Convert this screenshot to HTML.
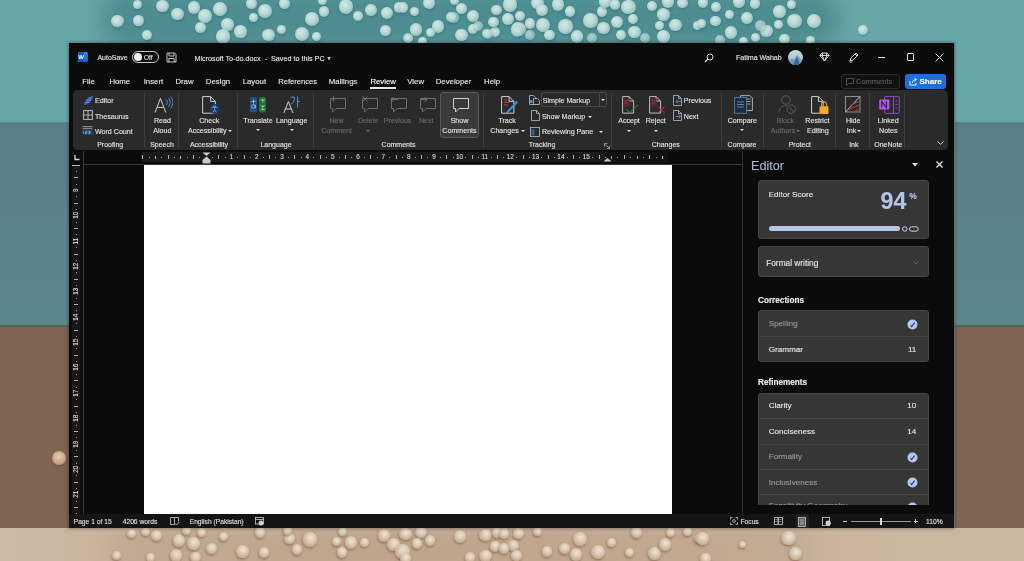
<!DOCTYPE html>
<html><head><meta charset="utf-8">
<style>
*{margin:0;padding:0;box-sizing:border-box}
html,body{width:1024px;height:561px;overflow:hidden}
body{position:relative;font-family:"Liberation Sans",sans-serif;background:#cdb9a6}
.bg{position:absolute;left:0;width:1024px}
.a{position:absolute}
#beadsT i{position:absolute;border-radius:50%;background:radial-gradient(circle at 42% 38%,#d3e8e5 0%,#bddbd8 35%,#98c3c1 72%,#7aaeae 100%);box-shadow:0.5px 1.5px 2px rgba(40,95,100,.35)}
#beadsB{filter:blur(0.35px)}
#beadsT{filter:blur(0.3px)}
#beadsB b{position:absolute;border-radius:50%;background:radial-gradient(circle at 55% 38%,#eee3d5 0%,#dccab4 38%,#c0a78e 75%,#a58a70 100%);box-shadow:-0.5px 1.5px 2.5px rgba(95,65,40,.45)}
#win{position:absolute;left:69px;top:43px;width:885px;height:485px;background:#0b0b0b;overflow:hidden;color:#e8e8e8;box-shadow:0 0 3px 1px rgba(0,0,0,.3)}
.t{position:absolute;white-space:nowrap;line-height:1;-webkit-text-stroke:0.12px currentColor}
</style></head><body>
<div class="bg" style="top:0;height:123px;background:#68a7a9"></div>
<div class="bg" style="top:123px;height:203px;background:linear-gradient(#5c7f89,#5b878c)"></div>
<div class="bg" style="top:326px;height:202px;background:#806453"></div>
<div class="bg" style="top:528px;height:33px;background:linear-gradient(90deg,#cdbaa7 0px,#c8b29d 120px,#c5ad96 400px,#c8b09a 700px,#cbb6a2 900px)"></div>
<div class="bg" style="top:122px;height:2px;background:#4f7d80;opacity:.7"></div>
<div class="bg" style="top:325px;height:2px;background:#4a5048;opacity:.6"></div>
<div class="a" style="left:100px;top:-10px;width:740px;height:58px;background:rgba(30,95,100,.36);filter:blur(10px);border-radius:30px"></div>
<div id="beadsT"><i style="left:111.3px;top:14.7px;width:12.6px;height:12.6px"></i><i style="left:132.5px;top:-0.1px;width:9.0px;height:9.0px"></i><i style="left:133.3px;top:15.1px;width:10.8px;height:10.8px"></i><i style="left:141.6px;top:29.6px;width:10.8px;height:10.8px"></i><i style="left:156.1px;top:-0.4px;width:12.6px;height:12.6px"></i><i style="left:171.4px;top:7.5px;width:12.6px;height:12.6px"></i><i style="left:187.5px;top:1.0px;width:12.6px;height:12.6px"></i><i style="left:197.5px;top:8.8px;width:14.4px;height:14.4px"></i><i style="left:195.2px;top:22.4px;width:10.8px;height:10.8px"></i><i style="left:212.8px;top:1.6px;width:14.4px;height:14.4px"></i><i style="left:221.2px;top:18.0px;width:12.6px;height:12.6px"></i><i style="left:215.8px;top:29.4px;width:14.4px;height:14.4px"></i><i style="left:234.4px;top:25.4px;width:12.6px;height:12.6px"></i><i style="left:246.1px;top:-1.9px;width:10.8px;height:10.8px"></i><i style="left:248.5px;top:13.1px;width:9.0px;height:9.0px"></i><i style="left:257.8px;top:3.6px;width:14.4px;height:14.4px"></i><i style="left:262.2px;top:28.7px;width:12.6px;height:12.6px"></i><i style="left:276.5px;top:24.5px;width:9.0px;height:9.0px"></i><i style="left:279.3px;top:-1.9px;width:10.8px;height:10.8px"></i><i style="left:294.5px;top:26.5px;width:14.4px;height:14.4px"></i><i style="left:304.5px;top:11.8px;width:14.4px;height:14.4px"></i><i style="left:311.5px;top:32.1px;width:9.0px;height:9.0px"></i><i style="left:318.6px;top:6.3px;width:10.8px;height:10.8px"></i><i style="left:318.3px;top:-4.5px;width:9.0px;height:9.0px"></i><i style="left:338.8px;top:-0.8px;width:14.4px;height:14.4px"></i><i style="left:352.6px;top:10.6px;width:10.8px;height:10.8px"></i><i style="left:364.7px;top:3.7px;width:12.6px;height:12.6px"></i><i style="left:380.5px;top:6.7px;width:12.6px;height:12.6px"></i><i style="left:380.4px;top:25.4px;width:10.8px;height:10.8px"></i><i style="left:393.6px;top:1.9px;width:10.8px;height:10.8px"></i><i style="left:397.6px;top:1.9px;width:10.8px;height:10.8px"></i><i style="left:410.1px;top:7.2px;width:9.0px;height:9.0px"></i><i style="left:422.7px;top:-3.3px;width:12.6px;height:12.6px"></i><i style="left:409.7px;top:23.0px;width:12.6px;height:12.6px"></i><i style="left:404.3px;top:33.5px;width:9.0px;height:9.0px"></i><i style="left:431.7px;top:20.1px;width:12.6px;height:12.6px"></i><i style="left:426.3px;top:27.5px;width:9.0px;height:9.0px"></i><i style="left:417.5px;top:36.5px;width:9.0px;height:9.0px"></i><i style="left:449.5px;top:-4.5px;width:9.0px;height:9.0px"></i><i style="left:456.1px;top:3.4px;width:10.8px;height:10.8px"></i><i style="left:445.6px;top:11.6px;width:10.8px;height:10.8px"></i><i style="left:466.7px;top:9.7px;width:12.6px;height:12.6px"></i><i style="left:455.2px;top:28.7px;width:12.6px;height:12.6px"></i><i style="left:467.6px;top:23.6px;width:10.8px;height:10.8px"></i><i style="left:481.5px;top:29.2px;width:9.0px;height:9.0px"></i><i style="left:489.6px;top:26.6px;width:10.8px;height:10.8px"></i><i style="left:491.3px;top:4.6px;width:10.8px;height:10.8px"></i><i style="left:488.4px;top:16.6px;width:10.8px;height:10.8px"></i><i style="left:502.8px;top:-2.8px;width:14.4px;height:14.4px"></i><i style="left:501.7px;top:12.7px;width:12.6px;height:12.6px"></i><i style="left:511.4px;top:21.8px;width:14.4px;height:14.4px"></i><i style="left:514.6px;top:10.6px;width:10.8px;height:10.8px"></i><i style="left:524.6px;top:18.0px;width:10.8px;height:10.8px"></i><i style="left:531.4px;top:-3.3px;width:12.6px;height:12.6px"></i><i style="left:535.7px;top:3.7px;width:12.6px;height:12.6px"></i><i style="left:535.5px;top:17.8px;width:14.4px;height:14.4px"></i><i style="left:544.0px;top:29.6px;width:10.8px;height:10.8px"></i><i style="left:551.7px;top:-1.9px;width:12.6px;height:12.6px"></i><i style="left:564.6px;top:6.3px;width:10.8px;height:10.8px"></i><i style="left:558.3px;top:19.2px;width:14.4px;height:14.4px"></i><i style="left:570.7px;top:30.3px;width:12.6px;height:12.6px"></i><i style="left:583.3px;top:13.3px;width:14.4px;height:14.4px"></i><i style="left:597.3px;top:21.5px;width:12.6px;height:12.6px"></i><i style="left:596.6px;top:6.3px;width:10.8px;height:10.8px"></i><i style="left:598.7px;top:-4.8px;width:12.6px;height:12.6px"></i><i style="left:610.7px;top:15.7px;width:12.6px;height:12.6px"></i><i style="left:609.6px;top:-1.0px;width:10.8px;height:10.8px"></i><i style="left:621.3px;top:0.1px;width:14.4px;height:14.4px"></i><i style="left:615.6px;top:29.6px;width:10.8px;height:10.8px"></i><i style="left:627.6px;top:13.6px;width:10.8px;height:10.8px"></i><i style="left:628.1px;top:25.7px;width:12.6px;height:12.6px"></i><i style="left:646.6px;top:0.6px;width:10.8px;height:10.8px"></i><i style="left:657.4px;top:8.3px;width:12.6px;height:12.6px"></i><i style="left:654.5px;top:20.5px;width:9.0px;height:9.0px"></i><i style="left:669.1px;top:18.7px;width:12.6px;height:12.6px"></i><i style="left:657.4px;top:30.3px;width:12.6px;height:12.6px"></i><i style="left:661.7px;top:-4.8px;width:12.6px;height:12.6px"></i><i style="left:677.3px;top:-2.4px;width:10.8px;height:10.8px"></i><i style="left:692.5px;top:20.5px;width:9.0px;height:9.0px"></i><i style="left:697.6px;top:-2.8px;width:10.8px;height:10.8px"></i><i style="left:710.6px;top:1.6px;width:10.8px;height:10.8px"></i><i style="left:696.9px;top:18.5px;width:9.0px;height:9.0px"></i><i style="left:710.0px;top:15.6px;width:10.8px;height:10.8px"></i><i style="left:724.5px;top:10.2px;width:9.0px;height:9.0px"></i><i style="left:732.7px;top:-4.7px;width:12.6px;height:12.6px"></i><i style="left:749.6px;top:-2.1px;width:10.8px;height:10.8px"></i><i style="left:740.7px;top:11.7px;width:12.6px;height:12.6px"></i><i style="left:724.5px;top:26.3px;width:12.6px;height:12.6px"></i><i style="left:750.5px;top:33.0px;width:9.0px;height:9.0px"></i><i style="left:760.3px;top:24.7px;width:12.6px;height:12.6px"></i><i style="left:773.4px;top:5.1px;width:12.6px;height:12.6px"></i><i style="left:773.5px;top:20.0px;width:9.0px;height:9.0px"></i><i style="left:786.5px;top:0.4px;width:9.0px;height:9.0px"></i><i style="left:787.2px;top:13.8px;width:14.4px;height:14.4px"></i><i style="left:806.8px;top:13.8px;width:14.4px;height:14.4px"></i><i style="left:779.2px;top:33.6px;width:10.8px;height:10.8px"></i><i style="left:806.2px;top:36.3px;width:9.0px;height:9.0px"></i><i style="left:857.5px;top:24.6px;width:10.8px;height:10.8px"></i><i style="left:739.3px;top:37.2px;width:9.0px;height:9.0px"></i><i style="left:447.5px;top:12.1px;width:11.0px;height:11.0px;opacity:.7"></i><i style="left:511.0px;top:25.0px;width:12.0px;height:12.0px;opacity:.7"></i><i style="left:483.0px;top:28.7px;width:10.0px;height:10.0px;opacity:.7"></i><i style="left:525.0px;top:30.0px;width:10.0px;height:10.0px;opacity:.7"></i><i style="left:403.0px;top:33.0px;width:10.0px;height:10.0px;opacity:.7"></i><i style="left:473.0px;top:21.0px;width:10.0px;height:10.0px;opacity:.7"></i><i style="left:587.0px;top:33.0px;width:10.0px;height:10.0px;opacity:.7"></i><i style="left:715.0px;top:35.0px;width:10.0px;height:10.0px;opacity:.7"></i><i style="left:754.5px;top:19.5px;width:11.0px;height:11.0px;opacity:.7"></i><i style="left:640.0px;top:33.0px;width:10.0px;height:10.0px;opacity:.7"></i></div>
<div class="a" style="left:110px;top:530px;width:700px;height:45px;background:rgba(120,85,55,.09);filter:blur(9px);border-radius:20px"></div>
<div id="beadsB"><b style="left:52px;top:450.5px;width:14px;height:14px;background:radial-gradient(circle at 50% 40%,#e6cdb4 0%,#cfae90 45%,#a98668 90%)"></b><b style="left:126.5px;top:529.3px;width:9.0px;height:9.0px"></b><b style="left:140.5px;top:527.3px;width:9.0px;height:9.0px"></b><b style="left:151.2px;top:530.3px;width:10.8px;height:10.8px"></b><b style="left:172.7px;top:534.3px;width:12.6px;height:12.6px"></b><b style="left:187.4px;top:537.2px;width:12.6px;height:12.6px"></b><b style="left:205.9px;top:543.0px;width:10.8px;height:10.8px"></b><b style="left:218.5px;top:532.2px;width:9.0px;height:9.0px"></b><b style="left:181.5px;top:525.5px;width:9.0px;height:9.0px"></b><b style="left:197.1px;top:528.3px;width:9.0px;height:9.0px"></b><b style="left:169.7px;top:549.0px;width:12.6px;height:12.6px"></b><b style="left:190.3px;top:551.6px;width:10.8px;height:10.8px"></b><b style="left:146.3px;top:552.5px;width:9.0px;height:9.0px"></b><b style="left:112.1px;top:550.5px;width:9.0px;height:9.0px"></b><b style="left:236.3px;top:545.1px;width:12.6px;height:12.6px"></b><b style="left:254.6px;top:527.4px;width:10.8px;height:10.8px"></b><b style="left:258.6px;top:546.9px;width:10.8px;height:10.8px"></b><b style="left:284.1px;top:533.3px;width:10.8px;height:10.8px"></b><b style="left:291.6px;top:544.0px;width:10.8px;height:10.8px"></b><b style="left:283.0px;top:526.4px;width:9.0px;height:9.0px"></b><b style="left:302.6px;top:532.4px;width:14.4px;height:14.4px"></b><b style="left:337.5px;top:527.3px;width:9.0px;height:9.0px"></b><b style="left:331.5px;top:537.1px;width:9.0px;height:9.0px"></b><b style="left:344.5px;top:536.3px;width:12.6px;height:12.6px"></b><b style="left:336.6px;top:546.9px;width:10.8px;height:10.8px"></b><b style="left:360.0px;top:538.1px;width:9.0px;height:9.0px"></b><b style="left:377.7px;top:529.4px;width:12.6px;height:12.6px"></b><b style="left:387.4px;top:538.2px;width:12.6px;height:12.6px"></b><b style="left:399.2px;top:527.5px;width:12.6px;height:12.6px"></b><b style="left:414.7px;top:525.5px;width:12.6px;height:12.6px"></b><b style="left:411.6px;top:538.1px;width:10.8px;height:10.8px"></b><b style="left:424.6px;top:535.2px;width:10.8px;height:10.8px"></b><b style="left:395.3px;top:544.2px;width:14.4px;height:14.4px"></b><b style="left:400.1px;top:552.8px;width:10.8px;height:10.8px"></b><b style="left:453.7px;top:530.4px;width:12.6px;height:12.6px"></b><b style="left:479.2px;top:528.5px;width:12.6px;height:12.6px"></b><b style="left:491.6px;top:527.4px;width:10.8px;height:10.8px"></b><b style="left:489.6px;top:541.1px;width:10.8px;height:10.8px"></b><b style="left:464.6px;top:551.8px;width:10.8px;height:10.8px"></b><b style="left:479.2px;top:549.9px;width:12.6px;height:12.6px"></b><b style="left:498.6px;top:528.4px;width:10.8px;height:10.8px"></b><b style="left:513.2px;top:528.4px;width:10.8px;height:10.8px"></b><b style="left:532.5px;top:527.3px;width:9.0px;height:9.0px"></b><b style="left:508.3px;top:540.1px;width:10.8px;height:10.8px"></b><b style="left:498.6px;top:543.0px;width:10.8px;height:10.8px"></b><b style="left:511.2px;top:549.9px;width:10.8px;height:10.8px"></b><b style="left:541.6px;top:546.0px;width:10.8px;height:10.8px"></b><b style="left:559.1px;top:543.0px;width:10.8px;height:10.8px"></b><b style="left:572.8px;top:531.5px;width:14.4px;height:14.4px"></b><b style="left:569.7px;top:548.0px;width:12.6px;height:12.6px"></b><b style="left:590.5px;top:545.1px;width:14.4px;height:14.4px"></b><b style="left:606.8px;top:538.1px;width:9.0px;height:9.0px"></b><b style="left:624.5px;top:547.8px;width:9.0px;height:9.0px"></b><b style="left:631.3px;top:527.4px;width:10.8px;height:10.8px"></b><b style="left:648.0px;top:547.0px;width:12.6px;height:12.6px"></b><b style="left:658.7px;top:538.2px;width:12.6px;height:12.6px"></b><b style="left:665.5px;top:528.3px;width:9.0px;height:9.0px"></b><b style="left:683.0px;top:527.3px;width:9.0px;height:9.0px"></b><b style="left:693.5px;top:534.2px;width:9.0px;height:9.0px"></b><b style="left:696.4px;top:532.4px;width:12.6px;height:12.6px"></b><b style="left:700.2px;top:552.8px;width:10.8px;height:10.8px"></b><b style="left:739.1px;top:540.9px;width:7.2px;height:7.2px"></b><b style="left:781.4px;top:530.5px;width:14.4px;height:14.4px"></b><b style="left:789.2px;top:547.0px;width:12.6px;height:12.6px"></b></div>
<div class="a" style="left:954px;top:43px;width:1px;height:485px;background:#7a8585;opacity:.8"></div>
<div id="win">

  <!-- title bar -->
  <div class="a" style="left:9px;top:9px;width:10px;height:10px;background:linear-gradient(135deg,#41a5ee,#185abd);border-radius:1.5px"></div>
  <div class="a" style="left:9px;top:9px;width:6px;height:10px;background:#185abd;border-radius:1px;color:#fff;font-size:6px;font-weight:bold;line-height:10px;text-align:center">W</div>
  <div class="t" style="left:28.4px;top:11px;font-size:7px;color:#e6e6e6">AutoSave</div>
  <div class="a" style="left:63px;top:8.3px;width:27px;height:11.5px;border:1px solid #c8c8c8;border-radius:6px"></div>
  <div class="a" style="left:65px;top:10.3px;width:7.6px;height:7.6px;background:#f0f0f0;border-radius:50%"></div>
  <div class="t" style="left:75px;top:11.8px;font-size:6.5px;color:#e6e6e6">Off</div>
  <svg class="a" style="left:96.5px;top:9px" width="11" height="11" viewBox="0 0 11 11"><path d="M1 1h7.5l1.5 1.5v7.5h-9z M3 1v3h5v-3 M2.8 10v-3.5h5.4v3.5" fill="none" stroke="#d8d8d8" stroke-width="0.9"/></svg>
  <div class="t" style="left:125.5px;top:11.9px;font-size:7.2px;color:#e6e6e6">Microsoft To-do.docx&nbsp; - &nbsp;Saved to this PC&nbsp;<span style="font-size:5px;position:relative;top:-1px">&#9660;</span></div>
  <svg class="a" style="left:635px;top:10px" width="10" height="10" viewBox="0 0 10 10"><circle cx="6" cy="4" r="3" fill="none" stroke="#e0e0e0" stroke-width="1"/><path d="M3.9 6.1L1 9" stroke="#e0e0e0" stroke-width="1.1"/></svg>
  <div class="t" style="left:666.9px;top:12.2px;font-size:7.1px;color:#e6e6e6">Fatima Wahab</div>
  <svg class="a" style="left:719.2px;top:6.7px" width="15" height="15" viewBox="0 0 15 15"><defs><linearGradient id="av" x1="0" y1="0" x2="0" y2="1"><stop offset="0" stop-color="#d2dde4"/><stop offset="1" stop-color="#88aecb"/></linearGradient><clipPath id="avc"><circle cx="7.5" cy="7.5" r="7.5"/></clipPath></defs><g clip-path="url(#avc)"><rect width="15" height="15" fill="url(#av)"/><path d="M0 13L4 8 6 10 9 5 15 12V15H0z" fill="#6f9cc0"/><path d="M5 15L9 6.5 12 15z" fill="#3e6688"/></g></svg>
  <svg class="a" style="left:750px;top:9px" width="11" height="10" viewBox="0 0 11 10"><path d="M3 1h5l2 2.5-4.5 5.5-4.5-5.5z M1 3.5h9 M4 1l-0.8 2.5 2.3 5.5 2.3-5.5-0.8-2.5" fill="none" stroke="#e6e6e6" stroke-width="0.9"/></svg>
  <svg class="a" style="left:778.5px;top:8.5px" width="11" height="11" viewBox="0 0 11 11"><path d="M2 9l1-3 5-5 2 2-5 5z M7 2l2 2 M1.5 10h3" fill="none" stroke="#e6e6e6" stroke-width="0.9"/></svg>
  <div class="a" style="left:809px;top:14px;width:7px;height:1px;background:#e6e6e6"></div>
  <div class="a" style="left:837.6px;top:10.3px;width:7.6px;height:7.6px;border:1px solid #e6e6e6;border-radius:1px"></div>
  <svg class="a" style="left:866px;top:10px" width="9" height="9" viewBox="0 0 9 9"><path d="M0.5 0.5l8 8M8.5 0.5l-8 8" stroke="#e6e6e6" stroke-width="1"/></svg>
  <div class="a" style="left:771.8px;top:31px;width:59px;height:14.6px;border:1px solid #2c2c2c;border-radius:3px;background:#111"></div>
  <svg class="a" style="left:776.5px;top:34.5px" width="8" height="8" viewBox="0 0 8 8"><path d="M0.5 0.5h7v5h-5l-2 2z" fill="none" stroke="#555" stroke-width="0.9"/></svg>
  <div class="t" style="left:787px;top:34.8px;font-size:7.5px;color:#5e5e5e">Comments</div>
  <div class="a" style="left:836.2px;top:31px;width:41.2px;height:14.6px;background:#1e6fd9;border-radius:3px"></div>
  <svg class="a" style="left:840px;top:34px" width="9" height="9" viewBox="0 0 9 9"><path d="M1 4v4h6v-2 M3.5 6c0-2.5 1.5-3.5 4-3.5 M5.5 1l2 1.5-2 1.5" fill="none" stroke="#fff" stroke-width="0.9"/></svg>
  <div class="t" style="left:850.5px;top:34.6px;font-size:8px;color:#fff;font-weight:bold">Share</div>
  <!-- tabs -->
  <div class="t" style="left:13.2px;top:35px;font-size:7.8px;color:#e8e8e8">File</div>
  <div class="t" style="left:40.4px;top:35px;font-size:7.8px;color:#e8e8e8">Home</div>
  <div class="t" style="left:74.7px;top:35px;font-size:7.8px;color:#e8e8e8">Insert</div>
  <div class="t" style="left:106.4px;top:35px;font-size:7.8px;color:#e8e8e8">Draw</div>
  <div class="t" style="left:136.8px;top:35px;font-size:7.8px;color:#e8e8e8">Design</div>
  <div class="t" style="left:173.7px;top:35px;font-size:7.8px;color:#e8e8e8">Layout</div>
  <div class="t" style="left:209.2px;top:35px;font-size:7.6px;color:#e8e8e8">References</div>
  <div class="t" style="left:259.8px;top:35px;font-size:7.8px;color:#e8e8e8">Mailings</div>
  <div class="t" style="left:301.4px;top:35px;font-size:7.8px;color:#fff">Review</div>
  <div class="a" style="left:301.4px;top:44px;width:26px;height:1.5px;background:#e8e8e8"></div>
  <div class="t" style="left:338.3px;top:35px;font-size:7.8px;color:#e8e8e8">View</div>
  <div class="t" style="left:366.7px;top:35px;font-size:7.8px;color:#e8e8e8">Developer</div>
  <div class="t" style="left:415px;top:35px;font-size:7.8px;color:#e8e8e8">Help</div>
  <!-- ribbon -->
<div class="a" style="left:4.4px;top:47px;width:874.7px;height:60.3px;background:#2a2a2a;border-radius:5px"></div>
<div class="a" style="left:74.8px;top:50px;width:1px;height:55px;background:#3d3d3d"></div>
<div class="a" style="left:109.4px;top:50px;width:1px;height:55px;background:#3d3d3d"></div>
<div class="a" style="left:167.5px;top:50px;width:1px;height:55px;background:#3d3d3d"></div>
<div class="a" style="left:244.3px;top:50px;width:1px;height:55px;background:#3d3d3d"></div>
<div class="a" style="left:413.5px;top:50px;width:1px;height:55px;background:#3d3d3d"></div>
<div class="a" style="left:541.9px;top:50px;width:1px;height:55px;background:#3d3d3d"></div>
<div class="a" style="left:651.6px;top:50px;width:1px;height:55px;background:#3d3d3d"></div>
<div class="a" style="left:693.9px;top:50px;width:1px;height:55px;background:#3d3d3d"></div>
<div class="a" style="left:765.6px;top:50px;width:1px;height:55px;background:#3d3d3d"></div>
<div class="a" style="left:800.2px;top:50px;width:1px;height:55px;background:#3d3d3d"></div>
<div class="a" style="left:835.3px;top:50px;width:1px;height:55px;background:#3d3d3d"></div>
<svg class="a" style="left:13.5px;top:51.6px" width="11" height="11" viewBox="0 0 11 11"><path d="M0.8 10.2C1.5 6 4.5 2 10.2 0.8C9.5 5 7 8.8 0.8 10.2z" fill="#2f5fb8"/><path d="M2.5 7.5h4M3.5 5.2h4.5M5.5 3h3.5" stroke="#6d9be8" stroke-width="0.8"/></svg>
<div class="t" style="left:26.0px;top:54.9px;font-size:7.1px;color:#e4e4e4">Editor</div>
<svg class="a" style="left:13.8px;top:67.0px" width="10" height="10" viewBox="0 0 10 10"><rect x="0.6" y="0.6" width="8.8" height="8.8" fill="none" stroke="#bdbdbd" stroke-width="1"/><path d="M5 0.6v8.8M0.6 5h8.8" stroke="#bdbdbd" stroke-width="0.9"/></svg>
<div class="t" style="left:26.0px;top:70.5px;font-size:7.1px;color:#e4e4e4">Thesaurus</div>
<svg class="a" style="left:13.4px;top:83.4px" width="11" height="9" viewBox="0 0 11 9"><path d="M0.5 0.7h10M0.5 2.7h10" stroke="#bdbdbd" stroke-width="0.8"/><rect x="0.5" y="4.3" width="10" height="4.3" fill="#244a7a"/><path d="M1.5 5.3v2.5M3.5 5.3h1.5v1.2h-1.5v1.3h1.5M6.5 5.3h1.5v2.5h-1.5M6.5 6.5h1.5" stroke="#9ec0ee" stroke-width="0.6" fill="none"/></svg>
<div class="t" style="left:26.0px;top:86.0px;font-size:7.1px;color:#e4e4e4">Word Count</div>
<div class="t" style="left:1.2px;width:80px;text-align:center;top:98.1px;font-size:7px;color:#e4e4e4">Proofing</div>
<svg class="a" style="left:84.6px;top:52.9px" width="19" height="17" viewBox="0 0 19 17"><path d="M1 16.6L6.4 2.4L11.8 16.6M3 11.4h6.8" fill="none" stroke="#cfcfcf" stroke-width="1"/><path d="M12.2 3.6c1.6 1.4 1.6 4.2 0 5.6M14.3 2c2.5 2.2 2.5 6.6 0 8.8M16.4 0.6c3.2 3 3.2 8.6 0 11.6" fill="none" stroke="#4a8fdc" stroke-width="1"/></svg>
<div class="t" style="left:53.4px;width:80px;text-align:center;top:75.1px;font-size:7.1px;color:#e4e4e4">Read</div>
<div class="t" style="left:53.4px;width:80px;text-align:center;top:85.0px;font-size:7.1px;color:#e4e4e4">Aloud</div>
<div class="t" style="left:53.0px;width:80px;text-align:center;top:98.1px;font-size:7px;color:#e4e4e4">Speech</div>
<svg class="a" style="left:132.6px;top:52.7px" width="18" height="19" viewBox="0 0 18 19"><path d="M0.6 0.6h8l4.8 4.8v11.8h-12.8z M8.6 0.6v4.8h4.8" fill="none" stroke="#cfcfcf" stroke-width="1"/><circle cx="12.6" cy="13" r="5" fill="#1d3a62"/><path d="M12.6 9.6a0.9 0.9 0 1 0 0.01 0M9.8 11.4h5.6M12.6 11.4v2.2M12.6 13.6l-1.6 2.8M12.6 13.6l1.6 2.8" fill="none" stroke="#5a9ae6" stroke-width="1"/></svg>
<div class="t" style="left:100.2px;width:80px;text-align:center;top:75.1px;font-size:7.1px;color:#e4e4e4">Check</div>
<div class="t" style="left:98.3px;width:80px;text-align:center;top:85.0px;font-size:7.1px;color:#e4e4e4">Accessibility</div>
<div class="a" style="left:158.5px;top:86.8px;width:0;height:0;border-left:2px solid transparent;border-right:2px solid transparent;border-top:2.2px solid #e4e4e4"></div>
<div class="t" style="left:100.0px;width:80px;text-align:center;top:98.1px;font-size:7px;color:#e4e4e4">Accessibility</div>
<svg class="a" style="left:180.2px;top:52.7px" width="19" height="17" viewBox="0 0 19 17"><rect x="1" y="1" width="7" height="15.5" rx="1.5" fill="#244f86"/><rect x="10" y="1" width="7" height="15.5" rx="1.5" fill="#23703a"/><path d="M2.5 5.5h4M4.5 3.5v4M2.6 10.5a1.8 1.8 0 1 0 3.6 0a1.8 1.8 0 1 0-3.6 0M6.2 8.7v3.6" fill="none" stroke="#a8c8f0" stroke-width="0.8"/><path d="M11.8 4h4M13.8 3v3.5M11.8 9.5c1 1.5 3 1.5 4 0M13.8 9.5v4M11.8 13.5h4" fill="none" stroke="#a9e0b4" stroke-width="0.8"/></svg>
<div class="t" style="left:149.0px;width:80px;text-align:center;top:75.1px;font-size:7.1px;color:#e4e4e4">Translate</div>
<div class="a" style="left:187.0px;top:86.0px;width:0;height:0;border-left:2px solid transparent;border-right:2px solid transparent;border-top:2.2px solid #e4e4e4"></div>
<svg class="a" style="left:213.8px;top:52.7px" width="19" height="18" viewBox="0 0 19 18"><path d="M0.8 17L5.4 5.6L10 17M2.5 13h5.8" fill="none" stroke="#cfcfcf" stroke-width="1"/><path d="M7.5 1.2h4c0 3-1 5.5-3.5 7M14.5 0.5v11M14.5 5.5h2.5" fill="none" stroke="#4a8fdc" stroke-width="1"/></svg>
<div class="t" style="left:182.7px;width:80px;text-align:center;top:75.1px;font-size:7.1px;color:#e4e4e4">Language</div>
<div class="a" style="left:220.7px;top:86.0px;width:0;height:0;border-left:2px solid transparent;border-right:2px solid transparent;border-top:2.2px solid #e4e4e4"></div>
<div class="t" style="left:167.0px;width:80px;text-align:center;top:98.1px;font-size:7px;color:#e4e4e4">Language</div>
<svg class="a" style="left:258.5px;top:52.5px" width="19" height="17" viewBox="0 0 19 17"><path d="M2.5 2.5h15v10h-9.5l-3.5 3.5v-3.5h-2z" fill="none" stroke="#6e6e6e" stroke-width="1"/><path d="M5.5 0.3v5M3 2.8h5" stroke="#6e6e6e" stroke-width="1"/></svg>
<div class="t" style="left:227.6px;width:80px;text-align:center;top:75.1px;font-size:7.1px;color:#6b6b6b">New</div>
<div class="t" style="left:227.6px;width:80px;text-align:center;top:85.0px;font-size:7.1px;color:#6b6b6b">Comment</div>
<svg class="a" style="left:290.8px;top:52.5px" width="19" height="17" viewBox="0 0 19 17"><path d="M2.5 2.5h15v10h-9.5l-3.5 3.5v-3.5h-2z" fill="none" stroke="#6e6e6e" stroke-width="1"/><path d="M2.5 0.5l5 5M7.5 0.5l-5 5" stroke="#6e6e6e" stroke-width="1"/></svg>
<div class="t" style="left:259.2px;width:80px;text-align:center;top:75.1px;font-size:7.1px;color:#6b6b6b">Delete</div>
<div class="a" style="left:297.2px;top:86.5px;width:0;height:0;border-left:2px solid transparent;border-right:2px solid transparent;border-top:2.2px solid #6e6e6e"></div>
<svg class="a" style="left:319.9px;top:52.5px" width="19" height="17" viewBox="0 0 19 17"><path d="M2.5 2.5h15v10h-9.5l-3.5 3.5v-3.5h-2z" fill="none" stroke="#6e6e6e" stroke-width="1"/><path d="M2 3.5h7M4.5 1l-2.5 2.5 2.5 2.5" fill="none" stroke="#6e6e6e" stroke-width="1"/></svg>
<div class="t" style="left:288.6px;width:80px;text-align:center;top:75.1px;font-size:7.1px;color:#6b6b6b">Previous</div>
<svg class="a" style="left:349.0px;top:52.5px" width="19" height="17" viewBox="0 0 19 17"><path d="M2.5 2.5h15v10h-9.5l-3.5 3.5v-3.5h-2z" fill="none" stroke="#6e6e6e" stroke-width="1"/><path d="M9 3.5h-7M6.5 1l2.5 2.5-2.5 2.5" fill="none" stroke="#6e6e6e" stroke-width="1"/></svg>
<div class="t" style="left:317.3px;width:80px;text-align:center;top:75.1px;font-size:7.1px;color:#6b6b6b">Next</div>
<div class="a" style="left:371.4px;top:49.2px;width:39px;height:45.6px;background:#3a3a3a;border:1px solid #5a5a5a;border-radius:3px"></div>
<svg class="a" style="left:381.5px;top:52.5px" width="19" height="17" viewBox="0 0 19 17"><path d="M2.5 2.5h15v10h-9.5l-3.5 3.5v-3.5h-2z" fill="none" stroke="#d0d0d0" stroke-width="1"/></svg>
<div class="t" style="left:350.5px;width:80px;text-align:center;top:75.1px;font-size:7.1px;color:#e4e4e4">Show</div>
<div class="t" style="left:350.5px;width:80px;text-align:center;top:85.0px;font-size:7.1px;color:#e4e4e4">Comments</div>
<div class="t" style="left:289.5px;width:80px;text-align:center;top:98.1px;font-size:7px;color:#e4e4e4">Comments</div>
<svg class="a" style="left:431.9px;top:52.6px" width="18" height="18" viewBox="0 0 18 18"><path d="M0.6 0.6h7.5l4.8 4.8v11.8h-12.3z M8.1 0.6v4.8h4.8" fill="none" stroke="#cfcfcf" stroke-width="1"/><path d="M3 4h3M3 6.5h5M3 9h4" stroke="#c93b3b" stroke-width="1"/><path d="M16.5 5.5L6.5 16" stroke="#3f8fd8" stroke-width="2"/><path d="M5.3 17.3l0.8-2.4 1.6 1.6z" fill="#3f8fd8"/></svg>
<div class="t" style="left:398.2px;width:80px;text-align:center;top:75.1px;font-size:7.1px;color:#e4e4e4">Track</div>
<div class="t" style="left:395.5px;width:80px;text-align:center;top:85.0px;font-size:7.1px;color:#e4e4e4">Changes</div>
<div class="a" style="left:451.5px;top:86.8px;width:0;height:0;border-left:2px solid transparent;border-right:2px solid transparent;border-top:2.2px solid #e4e4e4"></div>
<svg class="a" style="left:459.8px;top:52.0px" width="11" height="10" viewBox="0 0 11 10"><path d="M0.5 0.5h4l2 2v7h-6z" fill="none" stroke="#bdbdbd" stroke-width="0.8"/><path d="M4.5 3.5h4l2 2v4h-6z" fill="#2a2a2a" stroke="#bdbdbd" stroke-width="0.8"/><rect x="1" y="5" width="2.5" height="3" fill="#4a8fdc"/></svg>
<div class="a" style="left:471.8px;top:49px;width:66px;height:15.2px;border:1px solid #4a4a4a;border-radius:2px;background:#2a2a2a"></div>
<div class="a" style="left:529.6px;top:50.5px;width:1px;height:12.8px;background:#4a4a4a"></div>
<div class="a" style="left:532.0px;top:56.4px;width:0;height:0;border-left:2px solid transparent;border-right:2px solid transparent;border-top:2.2px solid #e4e4e4"></div>
<div class="t" style="left:473.8px;top:54.8px;font-size:7.1px;color:#e4e4e4">Simple Markup</div>
<svg class="a" style="left:461.7px;top:67.2px" width="9" height="11" viewBox="0 0 9 11"><path d="M0.5 0.5h5l3 3v7h-8z M5.5 0.5v3h3" fill="none" stroke="#bdbdbd" stroke-width="0.8"/></svg>
<div class="t" style="left:472.9px;top:70.8px;font-size:7.1px;color:#e4e4e4">Show Markup</div>
<div class="a" style="left:518.7px;top:72.5px;width:0;height:0;border-left:2px solid transparent;border-right:2px solid transparent;border-top:2.2px solid #e4e4e4"></div>
<svg class="a" style="left:460.7px;top:83.7px" width="10" height="10" viewBox="0 0 10 10"><rect x="0.5" y="0.5" width="9" height="9" fill="none" stroke="#bdbdbd" stroke-width="0.8"/><rect x="1.5" y="2" width="3" height="6.5" fill="#2f5d96"/></svg>
<div class="t" style="left:472.9px;top:86.3px;font-size:7.1px;color:#e4e4e4">Reviewing Pane</div>
<div class="a" style="left:529.7px;top:88.0px;width:0;height:0;border-left:2px solid transparent;border-right:2px solid transparent;border-top:2.2px solid #e4e4e4"></div>
<div class="t" style="left:433.0px;width:80px;text-align:center;top:98.1px;font-size:7px;color:#e4e4e4">Tracking</div>
<svg class="a" style="left:535.0px;top:99.5px" width="6" height="6" viewBox="0 0 6 6"><path d="M0.5 0.5h3M0.5 0.5v3M1.5 1.5l4 4M5.5 3v2.5h-2.5" fill="none" stroke="#bdbdbd" stroke-width="0.7"/></svg>
<svg class="a" style="left:553.2px;top:52.5px" width="17" height="18" viewBox="0 0 17 18"><path d="M0.6 0.6h6.5l4.5 4.5v12h-11z M7.1 0.6v4.5h4.5" fill="none" stroke="#bdbdbd" stroke-width="1"/><rect x="1.6" y="2.5" width="6" height="8" fill="#5a2630"/><path d="M2.5 4.5h4M2.5 7h4" stroke="#8a3a44" stroke-width="1"/><path d="M4.5 13l3 3.8 8.5-8" fill="none" stroke="#3b8c50" stroke-width="1"/></svg>
<div class="t" style="left:520.0px;width:80px;text-align:center;top:75.1px;font-size:7.1px;color:#e4e4e4">Accept</div>
<div class="a" style="left:558.0px;top:86.5px;width:0;height:0;border-left:2px solid transparent;border-right:2px solid transparent;border-top:2.2px solid #e4e4e4"></div>
<svg class="a" style="left:580.0px;top:52.5px" width="17" height="18" viewBox="0 0 17 18"><path d="M0.6 0.6h6.5l4.5 4.5v12h-11z M7.1 0.6v4.5h4.5" fill="none" stroke="#bdbdbd" stroke-width="1"/><rect x="1.6" y="2.5" width="6" height="8" fill="#5a2630"/><path d="M2.5 4.5h4M2.5 7h4" stroke="#8a3a44" stroke-width="1"/><path d="M9 10.5l6.5 6.5M15.5 10.5l-6.5 6.5" stroke="#c8383c" stroke-width="1"/></svg>
<div class="t" style="left:546.8px;width:80px;text-align:center;top:75.1px;font-size:7.1px;color:#e4e4e4">Reject</div>
<div class="a" style="left:584.8px;top:86.5px;width:0;height:0;border-left:2px solid transparent;border-right:2px solid transparent;border-top:2.2px solid #e4e4e4"></div>
<svg class="a" style="left:604.2px;top:52.0px" width="10" height="11" viewBox="0 0 10 11"><path d="M0.5 0.5h5l3 3v7h-8z M5.5 0.5v3h3" fill="none" stroke="#bdbdbd" stroke-width="0.8"/><path d="M3 6.5h5M5 4.5l-2 2 2 2" fill="none" stroke="#4a8fdc" stroke-width="0.9"/></svg>
<div class="t" style="left:614.8px;top:55.0px;font-size:7.1px;color:#e4e4e4">Previous</div>
<svg class="a" style="left:604.2px;top:67.0px" width="10" height="11" viewBox="0 0 10 11"><path d="M0.5 0.5h5l3 3v7h-8z M5.5 0.5v3h3" fill="none" stroke="#bdbdbd" stroke-width="0.8"/><path d="M2.5 6.5h5M5.5 4.5l2 2-2 2" fill="none" stroke="#4a8fdc" stroke-width="0.9"/></svg>
<div class="t" style="left:614.8px;top:70.6px;font-size:7.1px;color:#e4e4e4">Next</div>
<div class="t" style="left:556.8px;width:80px;text-align:center;top:98.1px;font-size:7px;color:#e4e4e4">Changes</div>
<svg class="a" style="left:664.5px;top:52.0px" width="19" height="19" viewBox="0 0 19 19"><path d="M6.5 0.6h9.5l2.4 2.4v12.5h-11.9z" fill="#2a2a2a" stroke="#bdbdbd" stroke-width="0.9"/><path d="M13 4h3.5M13 6.5h3.5M13 9h3.5" stroke="#bdbdbd" stroke-width="0.8"/><rect x="0.6" y="2.5" width="12" height="15.8" fill="#1c2c40" stroke="#4f7fae" stroke-width="0.9"/><path d="M3 7h7M3 9.5h7M3 12h7" stroke="#7d8896" stroke-width="0.9"/></svg>
<div class="t" style="left:633.3px;width:80px;text-align:center;top:75.1px;font-size:7.1px;color:#e4e4e4">Compare</div>
<div class="a" style="left:671.3px;top:86.2px;width:0;height:0;border-left:2px solid transparent;border-right:2px solid transparent;border-top:2.2px solid #e4e4e4"></div>
<div class="t" style="left:633.0px;width:80px;text-align:center;top:98.1px;font-size:7px;color:#e4e4e4">Compare</div>
<svg class="a" style="left:709.0px;top:52.0px" width="19" height="19" viewBox="0 0 19 19"><circle cx="8" cy="5" r="4.2" fill="none" stroke="#5d5d5d" stroke-width="1"/><path d="M1 17.5c0-4 3-7 7-7" fill="none" stroke="#5d5d5d" stroke-width="1"/><circle cx="13.2" cy="14.2" r="4.3" fill="none" stroke="#5d5d5d" stroke-width="1"/><path d="M10.5 11.5l5.4 5.4" stroke="#5d5d5d" stroke-width="1"/></svg>
<div class="t" style="left:676.5px;width:80px;text-align:center;top:75.1px;font-size:7.1px;color:#6b6b6b">Block</div>
<div class="t" style="left:674.0px;width:80px;text-align:center;top:85.0px;font-size:7.1px;color:#6b6b6b">Authors</div>
<div class="a" style="left:727.0px;top:86.8px;width:0;height:0;border-left:2px solid transparent;border-right:2px solid transparent;border-top:2.2px solid #6e6e6e"></div>
<svg class="a" style="left:742.3px;top:52.8px" width="18" height="19" viewBox="0 0 18 19"><path d="M0.6 0.6h6.8l4.8 4.8v11.8h-11.6z M7.4 0.6v4.8h4.8" fill="none" stroke="#cfcfcf" stroke-width="1"/><path d="M10.5 10.5v-2a2.6 2.6 0 0 1 5.2 0v2" fill="none" stroke="#e0a030" stroke-width="1.1"/><rect x="8.5" y="10.3" width="9" height="7.8" rx="0.8" fill="#f0a830"/></svg>
<div class="t" style="left:708.4px;width:80px;text-align:center;top:75.1px;font-size:7.1px;color:#e4e4e4">Restrict</div>
<div class="t" style="left:708.8px;width:80px;text-align:center;top:85.0px;font-size:7.1px;color:#e4e4e4">Editing</div>
<div class="t" style="left:690.8px;width:80px;text-align:center;top:98.1px;font-size:7px;color:#e4e4e4">Protect</div>
<svg class="a" style="left:776.0px;top:52.6px" width="16" height="17" viewBox="0 0 16 17"><rect x="0.5" y="0.5" width="14.5" height="15.5" fill="none" stroke="#9a9a9a" stroke-width="0.9"/><path d="M15 0.5L0.5 16" stroke="#bdbdbd" stroke-width="1"/><path d="M5 9.5l9-4M2.5 14l12-5M8 16l7-3" stroke="#a83a3a" stroke-width="1.3"/></svg>
<div class="t" style="left:744.2px;width:80px;text-align:center;top:75.1px;font-size:7.1px;color:#e4e4e4">Hide</div>
<div class="t" style="left:742.5px;width:80px;text-align:center;top:85.0px;font-size:7.1px;color:#e4e4e4">Ink</div>
<div class="a" style="left:788.0px;top:86.8px;width:0;height:0;border-left:2px solid transparent;border-right:2px solid transparent;border-top:2.2px solid #e4e4e4"></div>
<div class="t" style="left:744.8px;width:80px;text-align:center;top:98.1px;font-size:7px;color:#e4e4e4">Ink</div>
<svg class="a" style="left:809.8px;top:52.5px" width="21" height="18" viewBox="0 0 21 18"><rect x="5.6" y="0.6" width="14.7" height="16.8" rx="1" fill="#2a2a2a" stroke="#8c4fc2" stroke-width="1"/><path d="M14.5 0.6v16.8" stroke="#8c4fc2" stroke-width="1"/><path d="M16.5 5h2M16.5 8.5h2M16.5 12h2" stroke="#8c4fc2" stroke-width="1"/><rect x="0.2" y="3.6" width="10.2" height="10" rx="1" fill="#b058e8"/><path d="M2.8 11.6v-6l4.6 6v-6" fill="none" stroke="#2a1a3a" stroke-width="1.1"/></svg>
<div class="t" style="left:779.3px;width:80px;text-align:center;top:75.1px;font-size:7.1px;color:#e4e4e4">Linked</div>
<div class="t" style="left:779.3px;width:80px;text-align:center;top:85.0px;font-size:7.1px;color:#e4e4e4">Notes</div>
<div class="t" style="left:779.3px;width:80px;text-align:center;top:98.1px;font-size:7px;color:#e4e4e4">OneNote</div>
<svg class="a" style="left:868.3px;top:97.5px" width="7" height="4" viewBox="0 0 7 4"><path d="M0.5 0.5l3 2.8 3-2.8" fill="none" stroke="#d0d0d0" stroke-width="1"/></svg>
<div class="a" style="left:73.0px;top:108.8px;width:465.0px;height:10.4px;background:#1a1a1a"></div>
<div class="a" style="left:538.0px;top:108.8px;width:61.0px;height:10.4px;background:#121212"></div>
<div class="a" style="left:14.0px;top:121.0px;width:660.0px;height:0.8px;background:#3a3a3a"></div>
<div class="a" style="left:14.0px;top:108.0px;width:0.8px;height:363.0px;background:#3a3a3a"></div>
<div class="a" style="left:2.7px;top:121.8px;width:8.0px;height:349.5px;background:#171717"></div>
<div class="a" style="left:2.7px;top:121.8px;width:8.0px;height:1.5px;background:#bbbbbb"></div>
<svg class="a" style="left:3.5px;top:111.0px" width="7" height="7" viewBox="0 0 7 7"><path d="M2 1v4.5h4.5" fill="none" stroke="#d8d8d8" stroke-width="1.3"/></svg>
<div class="a" style="left:73.2px;top:112.4px;width:0.8px;height:3.6px;background:#b0b0b0"></div>
<div class="a" style="left:79.5px;top:113.7px;width:1px;height:1px;background:#a0a0a0"></div>
<div class="a" style="left:85.9px;top:112.7px;width:0.8px;height:3px;background:#b0b0b0"></div>
<div class="a" style="left:92.1px;top:113.7px;width:1px;height:1px;background:#a0a0a0"></div>
<div class="a" style="left:98.6px;top:112.4px;width:0.8px;height:3.6px;background:#b0b0b0"></div>
<div class="a" style="left:104.8px;top:113.7px;width:1px;height:1px;background:#a0a0a0"></div>
<div class="a" style="left:111.3px;top:112.7px;width:0.8px;height:3px;background:#b0b0b0"></div>
<div class="a" style="left:117.5px;top:113.7px;width:1px;height:1px;background:#a0a0a0"></div>
<div class="a" style="left:123.9px;top:112.4px;width:0.8px;height:3.6px;background:#b0b0b0"></div>
<div class="a" style="left:130.2px;top:113.7px;width:1px;height:1px;background:#a0a0a0"></div>
<div class="a" style="left:142.8px;top:113.7px;width:1px;height:1px;background:#a0a0a0"></div>
<div class="a" style="left:149.3px;top:112.4px;width:0.8px;height:3.6px;background:#b0b0b0"></div>
<div class="a" style="left:155.5px;top:113.7px;width:1px;height:1px;background:#a0a0a0"></div>
<div class="t" style="left:154.4px;width:16px;text-align:center;top:110.7px;font-size:6.4px;color:#d8d8d8">1</div>
<div class="a" style="left:168.2px;top:113.7px;width:1px;height:1px;background:#a0a0a0"></div>
<div class="a" style="left:174.6px;top:112.4px;width:0.8px;height:3.6px;background:#b0b0b0"></div>
<div class="a" style="left:180.9px;top:113.7px;width:1px;height:1px;background:#a0a0a0"></div>
<div class="t" style="left:179.7px;width:16px;text-align:center;top:110.7px;font-size:6.4px;color:#d8d8d8">2</div>
<div class="a" style="left:193.5px;top:113.7px;width:1px;height:1px;background:#a0a0a0"></div>
<div class="a" style="left:200.0px;top:112.4px;width:0.8px;height:3.6px;background:#b0b0b0"></div>
<div class="a" style="left:206.2px;top:113.7px;width:1px;height:1px;background:#a0a0a0"></div>
<div class="t" style="left:205.1px;width:16px;text-align:center;top:110.7px;font-size:6.4px;color:#d8d8d8">3</div>
<div class="a" style="left:218.9px;top:113.7px;width:1px;height:1px;background:#a0a0a0"></div>
<div class="a" style="left:225.3px;top:112.4px;width:0.8px;height:3.6px;background:#b0b0b0"></div>
<div class="a" style="left:231.6px;top:113.7px;width:1px;height:1px;background:#a0a0a0"></div>
<div class="t" style="left:230.4px;width:16px;text-align:center;top:110.7px;font-size:6.4px;color:#d8d8d8">4</div>
<div class="a" style="left:244.2px;top:113.7px;width:1px;height:1px;background:#a0a0a0"></div>
<div class="a" style="left:250.7px;top:112.4px;width:0.8px;height:3.6px;background:#b0b0b0"></div>
<div class="a" style="left:256.9px;top:113.7px;width:1px;height:1px;background:#a0a0a0"></div>
<div class="t" style="left:255.8px;width:16px;text-align:center;top:110.7px;font-size:6.4px;color:#d8d8d8">5</div>
<div class="a" style="left:269.6px;top:113.7px;width:1px;height:1px;background:#a0a0a0"></div>
<div class="a" style="left:276.0px;top:112.4px;width:0.8px;height:3.6px;background:#b0b0b0"></div>
<div class="a" style="left:282.3px;top:113.7px;width:1px;height:1px;background:#a0a0a0"></div>
<div class="t" style="left:281.1px;width:16px;text-align:center;top:110.7px;font-size:6.4px;color:#d8d8d8">6</div>
<div class="a" style="left:294.9px;top:113.7px;width:1px;height:1px;background:#a0a0a0"></div>
<div class="a" style="left:301.4px;top:112.4px;width:0.8px;height:3.6px;background:#b0b0b0"></div>
<div class="a" style="left:307.6px;top:113.7px;width:1px;height:1px;background:#a0a0a0"></div>
<div class="t" style="left:306.4px;width:16px;text-align:center;top:110.7px;font-size:6.4px;color:#d8d8d8">7</div>
<div class="a" style="left:320.3px;top:113.7px;width:1px;height:1px;background:#a0a0a0"></div>
<div class="a" style="left:326.7px;top:112.4px;width:0.8px;height:3.6px;background:#b0b0b0"></div>
<div class="a" style="left:333.0px;top:113.7px;width:1px;height:1px;background:#a0a0a0"></div>
<div class="t" style="left:331.8px;width:16px;text-align:center;top:110.7px;font-size:6.4px;color:#d8d8d8">8</div>
<div class="a" style="left:345.6px;top:113.7px;width:1px;height:1px;background:#a0a0a0"></div>
<div class="a" style="left:352.1px;top:112.4px;width:0.8px;height:3.6px;background:#b0b0b0"></div>
<div class="a" style="left:358.3px;top:113.7px;width:1px;height:1px;background:#a0a0a0"></div>
<div class="t" style="left:357.1px;width:16px;text-align:center;top:110.7px;font-size:6.4px;color:#d8d8d8">9</div>
<div class="a" style="left:371.0px;top:113.7px;width:1px;height:1px;background:#a0a0a0"></div>
<div class="a" style="left:377.4px;top:112.4px;width:0.8px;height:3.6px;background:#b0b0b0"></div>
<div class="a" style="left:383.7px;top:113.7px;width:1px;height:1px;background:#a0a0a0"></div>
<div class="t" style="left:382.5px;width:16px;text-align:center;top:110.7px;font-size:6.4px;color:#d8d8d8">10</div>
<div class="a" style="left:396.3px;top:113.7px;width:1px;height:1px;background:#a0a0a0"></div>
<div class="a" style="left:402.8px;top:112.4px;width:0.8px;height:3.6px;background:#b0b0b0"></div>
<div class="a" style="left:409.0px;top:113.7px;width:1px;height:1px;background:#a0a0a0"></div>
<div class="t" style="left:407.8px;width:16px;text-align:center;top:110.7px;font-size:6.4px;color:#d8d8d8">11</div>
<div class="a" style="left:421.7px;top:113.7px;width:1px;height:1px;background:#a0a0a0"></div>
<div class="a" style="left:428.1px;top:112.4px;width:0.8px;height:3.6px;background:#b0b0b0"></div>
<div class="a" style="left:434.4px;top:113.7px;width:1px;height:1px;background:#a0a0a0"></div>
<div class="t" style="left:433.2px;width:16px;text-align:center;top:110.7px;font-size:6.4px;color:#d8d8d8">12</div>
<div class="a" style="left:447.0px;top:113.7px;width:1px;height:1px;background:#a0a0a0"></div>
<div class="a" style="left:453.5px;top:112.4px;width:0.8px;height:3.6px;background:#b0b0b0"></div>
<div class="a" style="left:459.7px;top:113.7px;width:1px;height:1px;background:#a0a0a0"></div>
<div class="t" style="left:458.5px;width:16px;text-align:center;top:110.7px;font-size:6.4px;color:#d8d8d8">13</div>
<div class="a" style="left:472.4px;top:113.7px;width:1px;height:1px;background:#a0a0a0"></div>
<div class="a" style="left:478.8px;top:112.4px;width:0.8px;height:3.6px;background:#b0b0b0"></div>
<div class="a" style="left:485.1px;top:113.7px;width:1px;height:1px;background:#a0a0a0"></div>
<div class="t" style="left:483.9px;width:16px;text-align:center;top:110.7px;font-size:6.4px;color:#d8d8d8">14</div>
<div class="a" style="left:497.7px;top:113.7px;width:1px;height:1px;background:#a0a0a0"></div>
<div class="a" style="left:504.2px;top:112.4px;width:0.8px;height:3.6px;background:#b0b0b0"></div>
<div class="a" style="left:510.4px;top:113.7px;width:1px;height:1px;background:#a0a0a0"></div>
<div class="t" style="left:509.2px;width:16px;text-align:center;top:110.7px;font-size:6.4px;color:#d8d8d8">15</div>
<div class="a" style="left:523.1px;top:113.7px;width:1px;height:1px;background:#a0a0a0"></div>
<div class="a" style="left:529.5px;top:112.4px;width:0.8px;height:3.6px;background:#b0b0b0"></div>
<div class="a" style="left:535.8px;top:113.7px;width:1px;height:1px;background:#a0a0a0"></div>
<div class="a" style="left:542.2px;top:112.7px;width:0.8px;height:3px;background:#b0b0b0"></div>
<div class="a" style="left:548.4px;top:113.7px;width:1px;height:1px;background:#a0a0a0"></div>
<div class="a" style="left:554.9px;top:112.4px;width:0.8px;height:3.6px;background:#b0b0b0"></div>
<div class="a" style="left:561.1px;top:113.7px;width:1px;height:1px;background:#a0a0a0"></div>
<div class="a" style="left:567.5px;top:112.7px;width:0.8px;height:3px;background:#b0b0b0"></div>
<div class="a" style="left:573.8px;top:113.7px;width:1px;height:1px;background:#a0a0a0"></div>
<div class="a" style="left:580.2px;top:112.4px;width:0.8px;height:3.6px;background:#b0b0b0"></div>
<div class="a" style="left:586.5px;top:113.7px;width:1px;height:1px;background:#a0a0a0"></div>
<div class="a" style="left:592.9px;top:112.7px;width:0.8px;height:3px;background:#b0b0b0"></div>
<svg class="a" style="left:132.5px;top:109.0px" width="9" height="12" viewBox="0 0 9 12"><path d="M0.5 0.5h8l-4 3.5z" fill="#c8c8c8"/><path d="M0.5 8l4-3.5 4 3.5z" fill="#c8c8c8"/><rect x="0.5" y="8" width="8" height="3.5" fill="#c8c8c8"/></svg>
<svg class="a" style="left:534.0px;top:111.0px" width="9" height="8" viewBox="0 0 9 8"><path d="M0.5 7.5l4-3.5 4 3.5z" fill="#c8c8c8"/></svg>
<div class="a" style="left:6.7px;top:128.0px;width:1.0px;height:1.0px;background:#a0a0a0"></div>
<div class="a" style="left:5.4px;top:134.4px;width:3.6px;height:0.8px;background:#b0b0b0"></div>
<div class="a" style="left:6.7px;top:140.7px;width:1.0px;height:1.0px;background:#a0a0a0"></div>
<div class="t" style="left:-0.8px;width:16px;text-align:center;top:144.0px;font-size:6.4px;color:#d8d8d8;transform:rotate(-90deg)">9</div>
<div class="a" style="left:6.7px;top:153.3px;width:1.0px;height:1.0px;background:#a0a0a0"></div>
<div class="a" style="left:5.4px;top:159.8px;width:3.6px;height:0.8px;background:#b0b0b0"></div>
<div class="a" style="left:6.7px;top:166.0px;width:1.0px;height:1.0px;background:#a0a0a0"></div>
<div class="t" style="left:-0.8px;width:16px;text-align:center;top:169.4px;font-size:6.4px;color:#d8d8d8;transform:rotate(-90deg)">10</div>
<div class="a" style="left:6.7px;top:178.7px;width:1.0px;height:1.0px;background:#a0a0a0"></div>
<div class="a" style="left:5.4px;top:185.1px;width:3.6px;height:0.8px;background:#b0b0b0"></div>
<div class="a" style="left:6.7px;top:191.4px;width:1.0px;height:1.0px;background:#a0a0a0"></div>
<div class="t" style="left:-0.8px;width:16px;text-align:center;top:194.7px;font-size:6.4px;color:#d8d8d8;transform:rotate(-90deg)">11</div>
<div class="a" style="left:6.7px;top:204.0px;width:1.0px;height:1.0px;background:#a0a0a0"></div>
<div class="a" style="left:5.4px;top:210.5px;width:3.6px;height:0.8px;background:#b0b0b0"></div>
<div class="a" style="left:6.7px;top:216.7px;width:1.0px;height:1.0px;background:#a0a0a0"></div>
<div class="t" style="left:-0.8px;width:16px;text-align:center;top:220.1px;font-size:6.4px;color:#d8d8d8;transform:rotate(-90deg)">12</div>
<div class="a" style="left:6.7px;top:229.4px;width:1.0px;height:1.0px;background:#a0a0a0"></div>
<div class="a" style="left:5.4px;top:235.8px;width:3.6px;height:0.8px;background:#b0b0b0"></div>
<div class="a" style="left:6.7px;top:242.1px;width:1.0px;height:1.0px;background:#a0a0a0"></div>
<div class="t" style="left:-0.8px;width:16px;text-align:center;top:245.4px;font-size:6.4px;color:#d8d8d8;transform:rotate(-90deg)">13</div>
<div class="a" style="left:6.7px;top:254.7px;width:1.0px;height:1.0px;background:#a0a0a0"></div>
<div class="a" style="left:5.4px;top:261.2px;width:3.6px;height:0.8px;background:#b0b0b0"></div>
<div class="a" style="left:6.7px;top:267.4px;width:1.0px;height:1.0px;background:#a0a0a0"></div>
<div class="t" style="left:-0.8px;width:16px;text-align:center;top:270.8px;font-size:6.4px;color:#d8d8d8;transform:rotate(-90deg)">14</div>
<div class="a" style="left:6.7px;top:280.1px;width:1.0px;height:1.0px;background:#a0a0a0"></div>
<div class="a" style="left:5.4px;top:286.5px;width:3.6px;height:0.8px;background:#b0b0b0"></div>
<div class="a" style="left:6.7px;top:292.8px;width:1.0px;height:1.0px;background:#a0a0a0"></div>
<div class="t" style="left:-0.8px;width:16px;text-align:center;top:296.1px;font-size:6.4px;color:#d8d8d8;transform:rotate(-90deg)">15</div>
<div class="a" style="left:6.7px;top:305.4px;width:1.0px;height:1.0px;background:#a0a0a0"></div>
<div class="a" style="left:5.4px;top:311.9px;width:3.6px;height:0.8px;background:#b0b0b0"></div>
<div class="a" style="left:6.7px;top:318.1px;width:1.0px;height:1.0px;background:#a0a0a0"></div>
<div class="t" style="left:-0.8px;width:16px;text-align:center;top:321.4px;font-size:6.4px;color:#d8d8d8;transform:rotate(-90deg)">16</div>
<div class="a" style="left:6.7px;top:330.8px;width:1.0px;height:1.0px;background:#a0a0a0"></div>
<div class="a" style="left:5.4px;top:337.2px;width:3.6px;height:0.8px;background:#b0b0b0"></div>
<div class="a" style="left:6.7px;top:343.5px;width:1.0px;height:1.0px;background:#a0a0a0"></div>
<div class="t" style="left:-0.8px;width:16px;text-align:center;top:346.8px;font-size:6.4px;color:#d8d8d8;transform:rotate(-90deg)">17</div>
<div class="a" style="left:6.7px;top:356.1px;width:1.0px;height:1.0px;background:#a0a0a0"></div>
<div class="a" style="left:5.4px;top:362.6px;width:3.6px;height:0.8px;background:#b0b0b0"></div>
<div class="a" style="left:6.7px;top:368.8px;width:1.0px;height:1.0px;background:#a0a0a0"></div>
<div class="t" style="left:-0.8px;width:16px;text-align:center;top:372.1px;font-size:6.4px;color:#d8d8d8;transform:rotate(-90deg)">18</div>
<div class="a" style="left:6.7px;top:381.5px;width:1.0px;height:1.0px;background:#a0a0a0"></div>
<div class="a" style="left:5.4px;top:387.9px;width:3.6px;height:0.8px;background:#b0b0b0"></div>
<div class="a" style="left:6.7px;top:394.2px;width:1.0px;height:1.0px;background:#a0a0a0"></div>
<div class="t" style="left:-0.8px;width:16px;text-align:center;top:397.5px;font-size:6.4px;color:#d8d8d8;transform:rotate(-90deg)">19</div>
<div class="a" style="left:6.7px;top:406.8px;width:1.0px;height:1.0px;background:#a0a0a0"></div>
<div class="a" style="left:5.4px;top:413.3px;width:3.6px;height:0.8px;background:#b0b0b0"></div>
<div class="a" style="left:6.7px;top:419.5px;width:1.0px;height:1.0px;background:#a0a0a0"></div>
<div class="t" style="left:-0.8px;width:16px;text-align:center;top:422.8px;font-size:6.4px;color:#d8d8d8;transform:rotate(-90deg)">20</div>
<div class="a" style="left:6.7px;top:432.2px;width:1.0px;height:1.0px;background:#a0a0a0"></div>
<div class="a" style="left:5.4px;top:438.6px;width:3.6px;height:0.8px;background:#b0b0b0"></div>
<div class="a" style="left:6.7px;top:444.9px;width:1.0px;height:1.0px;background:#a0a0a0"></div>
<div class="t" style="left:-0.8px;width:16px;text-align:center;top:448.2px;font-size:6.4px;color:#d8d8d8;transform:rotate(-90deg)">21</div>
<div class="a" style="left:6.7px;top:457.5px;width:1.0px;height:1.0px;background:#a0a0a0"></div>
<div class="a" style="left:5.4px;top:464.0px;width:3.6px;height:0.8px;background:#b0b0b0"></div>
<div class="a" style="left:6.7px;top:470.2px;width:1.0px;height:1.0px;background:#a0a0a0"></div>
<div class="a" style="left:75.0px;top:121.8px;width:528.0px;height:349.2px;background:#ffffff"></div>
<div class="a" style="left:673.2px;top:108.0px;width:0.8px;height:363.0px;background:#2f2f2f"></div>
<div class="t" style="left:682px;top:117.3px;font-size:12.6px;color:#a9b4d0">Editor</div>
<svg class="a" style="left:842.5px;top:120.0px" width="6" height="4" viewBox="0 0 6 4"><path d="M0 0h6l-3 3.5z" fill="#e8e8e8"/></svg>
<svg class="a" style="left:866.8px;top:118.4px" width="7" height="7" viewBox="0 0 7 7"><path d="M0.5 0.5l6 6M6.5 0.5l-6 6" stroke="#f0f0f0" stroke-width="1.2"/></svg>
<div class="a" style="left:689px;top:136.9px;width:170.7px;height:59.6px;background:#363636;border:1px solid #474747;border-radius:3px"></div>
<div class="t" style="left:699.7px;top:147.6px;font-size:8.1px;color:#e8e8e8">Editor Score</div>
<div class="t" style="left:811.5px;top:147.3px;font-size:23.2px;font-weight:bold;color:#b6c4ea">94</div>
<div class="t" style="left:840.3px;top:149.3px;font-size:8.5px;font-weight:bold;color:#b6c4ea">%</div>
<div class="a" style="left:699.7px;top:183.3px;width:131.3px;height:5.0px;background:#b6c4ea;border-radius:2.5px"></div>
<svg class="a" style="left:833.0px;top:183.0px" width="17" height="6" viewBox="0 0 17 6"><circle cx="2.8" cy="3" r="2.2" fill="none" stroke="#c8d2ee" stroke-width="1"/><rect x="7.5" y="0.8" width="8.7" height="4.4" rx="2.2" fill="none" stroke="#c8d2ee" stroke-width="1"/></svg>
<div class="a" style="left:689px;top:203.2px;width:170.7px;height:31.3px;background:#363636;border:1px solid #474747;border-radius:3px"></div>
<div class="t" style="left:697.2px;top:215.5px;font-size:8.3px;color:#e8e8e8">Formal writing</div>
<svg class="a" style="left:843.5px;top:217.5px" width="6" height="4" viewBox="0 0 6 4"><path d="M0.5 0.5l2.5 2.5 2.5-2.5" fill="none" stroke="#6a6a6a" stroke-width="0.9"/></svg>
<div class="t" style="left:689.0px;top:253.6px;font-size:8.2px;color:#f0f0f0;font-weight:bold">Corrections</div>
<div class="a" style="left:689px;top:267px;width:170.7px;height:51.6px;background:#363636;border:1px solid #474747;border-radius:3px"></div>
<div class="a" style="left:690.0px;top:293.2px;width:168.7px;height:1.0px;background:#454545"></div>
<div class="t" style="left:699.7px;top:277.3px;font-size:8.1px;color:#9a9a9a">Spelling</div>
<svg class="a" style="left:838.3px;top:275.7px" width="11" height="11" viewBox="0 0 11 11"><circle cx="5.5" cy="5.5" r="5" fill="#b6c8ee"/><path d="M3.6 6.2l1.1 1.4 2.9-4" fill="none" stroke="#1f3a8a" stroke-width="1.1"/></svg>
<div class="t" style="left:699.7px;top:302.6px;font-size:8.1px;color:#e8e8e8">Grammar</div>
<div class="t" style="left:767.3px;width:80px;text-align:right;top:302.6px;font-size:8.1px;color:#e8e8e8">11</div>
<div class="t" style="left:689.0px;top:335.6px;font-size:8.2px;color:#f0f0f0;font-weight:bold">Refinements</div>
<div class="a" style="left:689px;top:350px;width:170.7px;height:112px;overflow:hidden"><div class="a" style="left:0;top:0;width:170.7px;height:140px;background:#363636;border:1px solid #474747;border-radius:3px"></div>
<div class="a" style="left:1px;top:25px;width:168.7px;height:1px;background:#454545"></div>
<div class="a" style="left:1px;top:50.5px;width:168.7px;height:1px;background:#454545"></div>
<div class="a" style="left:1px;top:76px;width:168.7px;height:1px;background:#454545"></div>
<div class="a" style="left:1px;top:100.9px;width:168.7px;height:1px;background:#454545"></div>
</div>
<div class="t" style="left:699.7px;top:359.3px;font-size:8.1px;color:#e8e8e8">Clarity</div>
<div class="t" style="left:767.3px;width:80px;text-align:right;top:359.3px;font-size:8.1px;color:#e8e8e8">10</div>
<div class="t" style="left:699.7px;top:384.8px;font-size:8.1px;color:#e8e8e8">Conciseness</div>
<div class="t" style="left:767.3px;width:80px;text-align:right;top:384.8px;font-size:8.1px;color:#e8e8e8">14</div>
<div class="t" style="left:699.7px;top:410.1px;font-size:8.1px;color:#9a9a9a">Formality</div>
<svg class="a" style="left:838.3px;top:408.5px" width="11" height="11" viewBox="0 0 11 11"><circle cx="5.5" cy="5.5" r="5" fill="#b6c8ee"/><path d="M3.6 6.2l1.1 1.4 2.9-4" fill="none" stroke="#1f3a8a" stroke-width="1.1"/></svg>
<div class="t" style="left:699.7px;top:435.6px;font-size:8.1px;color:#9a9a9a">Inclusiveness</div>
<svg class="a" style="left:838.3px;top:434.0px" width="11" height="11" viewBox="0 0 11 11"><circle cx="5.5" cy="5.5" r="5" fill="#b6c8ee"/><path d="M3.6 6.2l1.1 1.4 2.9-4" fill="none" stroke="#1f3a8a" stroke-width="1.1"/></svg>
<div class="a" style="left:689px;top:458px;width:170.7px;height:4px;overflow:hidden">
<div class="t" style="left:10.7px;top:1.2px;font-size:8.1px;color:#9a9a9a">Sensitivity Geography</div>
<svg class="a" style="left:149.3px;top:1px" width="11" height="11"><circle cx="5.5" cy="5.5" r="5" fill="#b6c8ee"/></svg></div>
<div class="a" style="left:0.0px;top:471.3px;width:885.0px;height:13.7px;background:#141414"></div>
<div class="t" style="left:4.7px;top:476.1px;font-size:6.7px;color:#e0e0e0">Page 1 of 15</div>
<div class="t" style="left:53.7px;top:476.1px;font-size:6.7px;color:#e0e0e0">4206 words</div>
<svg class="a" style="left:101.0px;top:474.0px" width="10" height="9" viewBox="0 0 10 9"><path d="M0.5 0.5h4v7h-4z M4.5 0.5h4v4" fill="none" stroke="#d0d0d0" stroke-width="0.8"/><path d="M5 6.5l1.5 1.5 3-3" fill="none" stroke="#d0d0d0" stroke-width="0.8"/></svg>
<div class="t" style="left:120.7px;top:476.1px;font-size:6.7px;color:#e0e0e0">English (Pakistan)</div>
<svg class="a" style="left:185.8px;top:474.0px" width="9" height="9" viewBox="0 0 9 9"><rect x="0.5" y="0.5" width="8" height="6.5" fill="none" stroke="#d0d0d0" stroke-width="0.8"/><path d="M0.5 2.5h8" stroke="#d0d0d0" stroke-width="0.8"/><circle cx="6" cy="6" r="2.5" fill="#d0d0d0"/></svg>
<svg class="a" style="left:661.0px;top:474.3px" width="8" height="8" viewBox="0 0 8 8"><path d="M0.5 2.5v-2h2M7.5 2.5v-2h-2M0.5 5.5v2h2M7.5 5.5v2h-2" fill="none" stroke="#d0d0d0" stroke-width="0.8"/><circle cx="4" cy="4" r="1.4" fill="none" stroke="#d0d0d0" stroke-width="0.7"/></svg>
<div class="t" style="left:671.5px;top:476.1px;font-size:6.7px;color:#e0e0e0">Focus</div>
<svg class="a" style="left:704.5px;top:474.0px" width="9" height="8" viewBox="0 0 9 8"><path d="M0.5 0.5h3.5v7h-3.5z M4.5 0.5h4v7h-4z" fill="none" stroke="#d0d0d0" stroke-width="0.8"/><path d="M1.5 2.5h1.5M1.5 4.5h1.5M5.5 2.5h2M5.5 4.5h2" stroke="#d0d0d0" stroke-width="0.6"/></svg>
<div class="a" style="left:726.5px;top:471.3px;width:13.5px;height:13.7px;background:#232323"></div>
<svg class="a" style="left:729.2px;top:473.8px" width="8" height="10" viewBox="0 0 8 10"><rect x="0.5" y="0.5" width="7" height="9" fill="#5a5a5a" stroke="#c8c8c8" stroke-width="0.8"/><path d="M2 3h4M2 5h4M2 7h4" stroke="#d8d8d8" stroke-width="0.7"/></svg>
<svg class="a" style="left:752.5px;top:474.0px" width="9" height="9" viewBox="0 0 9 9"><rect x="0.5" y="0.5" width="7" height="8" fill="none" stroke="#d0d0d0" stroke-width="0.8"/><circle cx="6.2" cy="6.2" r="2.6" fill="#d0d0d0"/></svg>
<div class="a" style="left:773.5px;top:478.0px;width:4.0px;height:0.9px;background:#c8c8c8"></div>
<div class="a" style="left:781.5px;top:478.2px;width:60.5px;height:0.7px;background:#9a9a9a"></div>
<div class="a" style="left:811.0px;top:475.0px;width:2.2px;height:7.0px;background:#d8d8d8"></div>
<div class="a" style="left:844.5px;top:478.0px;width:4.0px;height:0.9px;background:#c8c8c8"></div>
<div class="a" style="left:846.1px;top:476.4px;width:0.9px;height:4.0px;background:#c8c8c8"></div>
<div class="t" style="left:857.0px;top:476.1px;font-size:6.7px;color:#e0e0e0">110%</div>
</div>
</body></html>
